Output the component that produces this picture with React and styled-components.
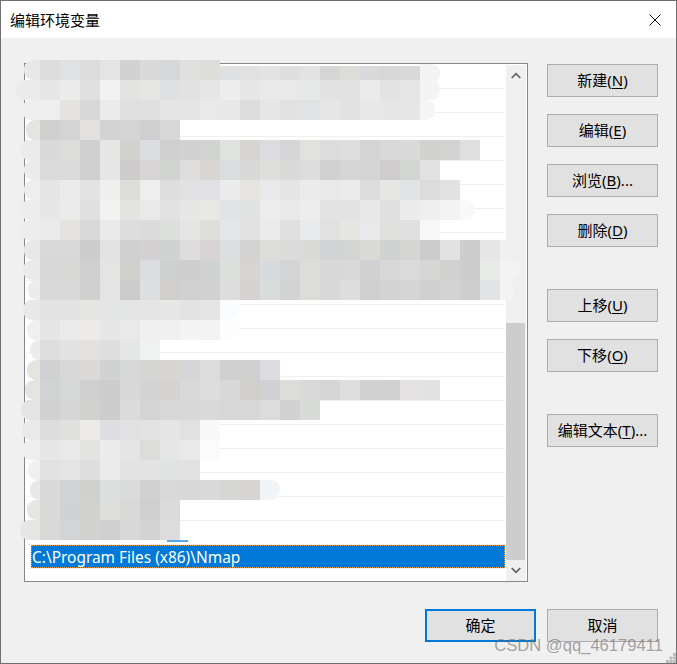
import React from "react";
import styled, { createGlobalStyle } from "styled-components";

const Global = createGlobalStyle`
  html, body { margin: 0; padding: 0; background: #f0f0f0; }
  * { box-sizing: border-box; }
`;

const FONT = `"Noto Sans", "Noto Sans CJK SC", sans-serif`;

const Dialog = styled.div`
  position: relative;
  width: 677px;
  height: 664px;
  border: 1px solid #707070;
  background: #f0f0f0;
  font-family: ${FONT};
  overflow: hidden;
  display: flex;
  flex-direction: column;
`;
const TitleBar = styled.header`
  height: 37px;
  flex: none;
  background: #fff;
  display: flex;
  align-items: center;
  justify-content: space-between;
  padding: 0 15px 0 9px;
`;
const Title = styled.h1`
  margin: 0;
  font: 400 15px/20px "Noto Sans CJK SC", sans-serif;
  color: #000;
`;
const CloseIcon = styled.svg`
  display: block;
  width: 12px;
  height: 12px;
`;
const Body = styled.main`
  flex: 1;
  padding: 25px 18px 0 23px;
  display: flex;
  flex-direction: column;
`;
const TopRow = styled.div`
  display: flex;
  gap: 19px;
`;
const List = styled.div`
  position: relative;
  width: 504px;
  height: 519px;
  flex: none;
  border: 1px solid #828790;
  background: #fff;
  display: flex;
  padding: 1px 1px 0 1px;
`;
const Rows = styled.ul`
  width: 480px;
  margin: 0;
  padding: 0;
  list-style: none;
`;
const Row = styled.li`
  height: 24px;
  margin-left: 1px;
  border-bottom: 1px solid #f0f0f0;
  display: flex;
`;
const SelectedText = styled.div`
  flex: 1;
  margin-left: 4px;
  height: 23px;
  padding-left: 1px;
  background: #0078d7;
  color: #fff;
  outline: 1px dotted #e89a3c;
  outline-offset: -1px;
  font: 400 15.45px/24px ${FONT};
  white-space: nowrap;
`;
const Scrollbar = styled.div`
  width: 20px;
  height: 516px;
  margin-left: 1px;
  background: #f0f0f0;
  display: flex;
  flex-direction: column;
`;
const ArrowBox = styled.div`
  height: 21px;
  flex: none;
  width: 19px;
  display: flex;
  align-items: center;
  justify-content: center;
`;
const ArrowIcon = styled.svg`
  display: block;
  width: 10px;
  height: 7px;
`;
const Track = styled.div`
  flex: 1;
  display: flex;
  flex-direction: column;
  justify-content: flex-end;
`;
const Thumb = styled.div`
  width: 19px;
  height: 237px;
  background: #cdcdcd;
`;
const ButtonColumn = styled.div`
  width: 111px;
  padding-top: 1px;
  display: flex;
  flex-direction: column;
`;
const Btn = styled.button`
  width: 111px;
  height: 33px;
  flex: none;
  margin: 0;
  margin-top: ${(p) => p.$top || 0}px;
  padding: 0 0 2px;
  background: #e1e1e1;
  border: ${(p) => (p.$primary ? "2px solid #0078d7" : "1px solid #adadad")};
  border-radius: 0;
  color: #000;
  font: 400 15px/20px ${FONT};
  white-space: nowrap;
  text-align: center;
  u { text-underline-offset: 2px; text-decoration-thickness: 1px; }
`;
const Footer = styled.footer`
  margin-top: 27px;
  display: flex;
  justify-content: flex-end;
  gap: 11px;
`;
const Mosaic = styled.div`
  position: absolute;
  left: -9px;
  top: -4px;
  display: flex;
  flex-direction: column;
  pointer-events: none;
`;
const MosaicRow = styled.div`
  display: flex;
  height: 20px;
`;
const Lead = styled.div`
  width: 24px;
  display: flex;
  justify-content: flex-end;
`;
const LeadBlob = styled.div`
  height: 20px;
  border-radius: 9px 0 0 9px;
`;
const Cell = styled.div`
  width: 20px;
  height: 20px;
  flex: none;
  margin-top: ${(p) => (p.$inset ? 6 : 0)}px;
`;
const Tail = styled.div`
  height: 20px;
  flex: none;
  border-radius: 0 9px 9px 0;
  margin-top: ${(p) => (p.$inset ? 4 : 0)}px;
`;
const Speck = styled.div`
  position: absolute;
  left: 142px;
  top: 476px;
  width: 21px;
  height: 2px;
  background: #5aa6e0;
`;
const Watermark = styled.div`
  position: absolute;
  right: 13px;
  bottom: 8px;
  font: 400 16.6px/18px "Liberation Sans", Arial, sans-serif;
  color: rgba(110, 110, 110, 0.62);
  white-space: nowrap;
`;
const Grip = styled.svg`
  position: absolute;
  right: 0;
  bottom: 0;
  width: 10px;
  height: 10px;
`;

const mosaicData = [
  [16, "e8e8e8", "dddddd e0e1e3 dcdcdc e3e4e6 d2d2d2 dadada d6d7d9 e0e0e0 deddda dfe0e2 e0e1e0 e3e3e3 dfdfdf e2e3e2 d6d6d6 dddcd9 d9dadc d7d7d7 d9d9d9", [20, "f3f3f5"]],
  [24, "ebebeb", "e7e7e7 ececec e0e0e0 f1f3f2 e3e3e1 e6e6e5 dfe0e2 e2e2e2 e7e6e4 ecedec e7e7e7 e9e9e9 e9e9e9 e7e9e8 e2e2e2 e2e2e2 ebebeb e3e3e3 e6e6e6", [20, "f4f4f5"]],
  [18, "eeeeee", "eeeeee e4e3e0 d8d8d8 ebedec e0e0e0 e0e0e0 e5e5e5 e5e4e2 e8eaea e8e8e8 dcdcdc e6e6e6 e4e2e0 e1e3e5 e6e6e6 e2e2e2 e8e8e8 e7e7e7 e7e7e7", [15, "f5f5f5"]],
  [14, "e5e4e1", "d0d0d0 d4d4d4 e2e1df d2d3d5 d4d4d4 cfcfcf d8d8d8"],
  [20, "ebebeb", "dadada dcdcda d0d0d0 e5e7e6 d4d2cf dcdde0 cfcfcf d3d1d1 d2d4d2 e0e2e0 d7d5d2 dbdcdf d6d6d6 e1e1dd dcdcdc dddee0 d4d4d4 d9d9d9 dadada d3d2cf d3d4d2 e0e0e0"],
  [16, "ececec", "dbdbdb dbdbdb cfcfcf e5e7e6 cecdcb d7d5d6 d2d4d2 dedede d9d5d3 d9dddd d8d8d8 dedfdb dadada dcdddc d1d1d1 d6d6d6 d5d5d5 cfcdcd d2d5d2 e2e2e2"],
  [16, "eeeeee", "e5e5e5 ebebeb e3e3e3 eef0ef dcdcd9 eeeeee dedede e1e1e1 dfe1e4 ececec e5e4e1 e8e9ea e5e5e5 ebebeb e9e9e9 ebebeb dcdcdc e6e6e4 e2e3e4 dcdcdc e2e2e2"],
  [20, "ededed", "e7e7e7 ebebeb e0e0e0 f1f3f2 e3e3e0 e9e9e9 e2e2e2 e7e7e7 e9e8e5 e1e3e5 e1e2e2 ededed e9e9e9 ededed e3e3e3 e3e3e3 e8e8e8 e0e0e0 ececec efefef f3f3f3", [15, "f9f9f9"]],
  [20, "ededed", "ebebeb e4e3e0 d9d9d9 e9ebea dddddd dbdbdb dde0dd e5e5e5 dfdedb e5e6e8 e2e2e2 ebebeb e0e0e0 e8e9eb e1e1e1 e6e5e2 e8e9eb e0e0de e0e0e0 f7f8fa"],
  [16, "e8e8e8", "d9d9d9 d9d9d9 cdcdcd e2e4e3 d0d0d0 d3d1d2 d1d3d2 dddddd d8d4d3 dcdedf d3d3d3 dcdcd9 dbdbdb dadad8 d2d3d5 d3d5d4 d9d9d6 d1d3d2 d5d5d3 cccccc e2e2e2 cdcdcd e6e6e6", [17, "f0f0f0"]],
  [17, "eaeaea", "d8d8d8 d8d8d6 cfcfcf e3e5e4 d1cfcc dbdcdf cecfcf cfcdce d0d3d1 dee0de d6d3d1 d7dbdd d4d4d4 dcdcd9 d8d8d8 d9d9d9 d0d2d4 d8d8d8 dbdbdb d6d6d4 d2d2d0 cdcdcd e9ebe9", [20, "f3f3f3"]],
  [12, "ececec", "d9d9d9 d9d9d9 d0d0d0 e3e5e4 cccccc dedfe1 d0cfcc d1d1d1 d0d2d0 dddddd d6d2d1 d8dcdc d3d3d3 dcdcd9 d8d8d8 dddddd cecfcf d3d3d3 d5d5d5 d1cfcf d2d4d2 cecece e2e3e5", [14, "f3f3f3"]],
  [17, "e8e8e8", "e3e3e3 e3e3e3 e5e5e2 e3e5e4 e4e6e5 e4e5e4 e7e7e7 e3e3e3 e5e5e5", [20, "fafcfe"]],
  [13, "f0f0ee", "e3e5e7 ebebeb edecea e6e7e9 e9e9e9 f0f0f0 f0f0f0 f3f4f4 f3f3f3", [20, "fdfdfd"]],
  [10, "ececec", "dcdfdd e2e2e2 e3e2df dfdfdf e4e6e8 f0f2f1"],
  [13, "e5e4e1", "cfd1d3 d7d7d7 dad9d7 d1d2d4 d6d8d7 d5d5d3 d6d5d2 d5d6d8 dcdcda d0d0d0 d0d0d0 dcdde0"],
  [15, "e5e4e1", "d1d3d5 d6d8d7 cfcfcf cccccc d8d8d8 d3d3d3 d4d3d0 d9d9d9 dcdedd d8d8d8 d0cfcc cfd1d3 dcdcd9 d9d9d9 d6d6d6 dedede d2d2d2 d1d1d1 e4e2e2 e1e2e4"],
  [19, "e5e4e2", "d1d1d1 d6d6d6 d1d1cf cdcdcd d9dcda d4d4d4 d7d7d7 d8d8d8 dadada d7d7d7 d7d7d7 dcdcdc d2d2d2 d9dbd9"],
  [18, "e9e9e9", "dddddd e0e0de ecebe8 dddee1 e1e1e1 e3e3e3 e5e5e5 e1e1e1 f8faf9"],
  [18, "efefef", "e6e8e6 e9e9e9 e3e3e1 ebedec e5e5e5 dcdcda e6e6e6 e9e9e9 fbfbfb"],
  [12, "f0f0f0", "dfe1e3 e4e4e4 dedede ebebeb e3e3e3 e3e3e3 dfe3e1 e2e2e2"],
  [10, "e8e8e8", "dadad8 d1d3d5 d0d0ce dce0de dbdbd9 d1d1d1 d9d9d9 d8d8d8 dadada d6d6d4 d6d5d3", [20, "f2f5f8"]],
  [13, "e6e6e4", "d9d9d7 d0d2d4 d1d1cf dcdfdc dad9d7 cfcfcf dbdbdb"],
  [20, "e6e6e4", "d9d9d7 d2d4d6 d2d2d0 cfcfcf d8d8d8 d3d3d3 dcdcdc"],
];

const Mnemonic = ({ before, ch, after = ")" }) => (
  <>
    {before}(<u>{ch}</u>{after}
  </>
);

export default function App() {
  return (
    <Dialog>
      <Global />
      <TitleBar>
        <Title>编辑环境变量</Title>
        <CloseIcon viewBox="0 0 12 12">
          <path d="M0.5 0.5 L11.5 11.5 M11.5 0.5 L0.5 11.5" stroke="#111" strokeWidth="1" fill="none" />
        </CloseIcon>
      </TitleBar>
      <Body>
        <TopRow>
          <List>
            <Rows>
              {Array.from({ length: 20 }, (_, i) => (
                <Row key={i} />
              ))}
              <Row>
                <SelectedText>C:\Program Files (x86)\Nmap</SelectedText>
              </Row>
            </Rows>
            <Scrollbar>
              <ArrowBox>
                <ArrowIcon viewBox="0 0 10 7">
                  <path d="M0.7 6 L5 1.6 L9.3 6" stroke="#606060" strokeWidth="1.7" fill="none" />
                </ArrowIcon>
              </ArrowBox>
              <Track>
                <Thumb />
              </Track>
              <ArrowBox>
                <ArrowIcon viewBox="0 0 10 7">
                  <path d="M0.7 1 L5 5.4 L9.3 1" stroke="#606060" strokeWidth="1.7" fill="none" />
                </ArrowIcon>
              </ArrowBox>
            </Scrollbar>
            <Mosaic>
              {mosaicData.map(([leadW, leadC, cells, tail], r) => (
                <MosaicRow key={r}>
                  <Lead>
                    <LeadBlob style={{ width: leadW, background: `#${leadC}` }} />
                  </Lead>
                  {cells.split(" ").map((c, i) => (
                    <Cell key={i} $inset={r === 0 && i >= 9} style={{ background: `#${c}` }} />
                  ))}
                  {tail && <Tail $inset={r === 0} style={{ width: tail[0], background: `#${tail[1]}` }} />}
                </MosaicRow>
              ))}
            </Mosaic>
            <Speck />
          </List>
          <ButtonColumn>
            <Btn><Mnemonic before="新建" ch="N" /></Btn>
            <Btn $top={17}><Mnemonic before="编辑" ch="E" /></Btn>
            <Btn $top={17}><Mnemonic before="浏览" ch="B" after=")..." /></Btn>
            <Btn $top={17}><Mnemonic before="删除" ch="D" /></Btn>
            <Btn $top={42}><Mnemonic before="上移" ch="U" /></Btn>
            <Btn $top={17}><Mnemonic before="下移" ch="O" /></Btn>
            <Btn $top={42}><Mnemonic before="编辑文本" ch="T" after=")..." /></Btn>
          </ButtonColumn>
        </TopRow>
        <Footer>
          <Btn $primary>确定</Btn>
          <Btn>取消</Btn>
        </Footer>
      </Body>
      <Watermark>CSDN @qq_46179411</Watermark>
      <Grip viewBox="0 0 10 10">
        <path d="M7 0h3v3H7z M3.5 3.5h3v3h-3z M7 3.5h3v3H7z M0 7h3v3H0z M3.5 7h3v3h-3z M7 7h3v3H7z" fill="#bdbdbd" />
      </Grip>
    </Dialog>
  );
}
